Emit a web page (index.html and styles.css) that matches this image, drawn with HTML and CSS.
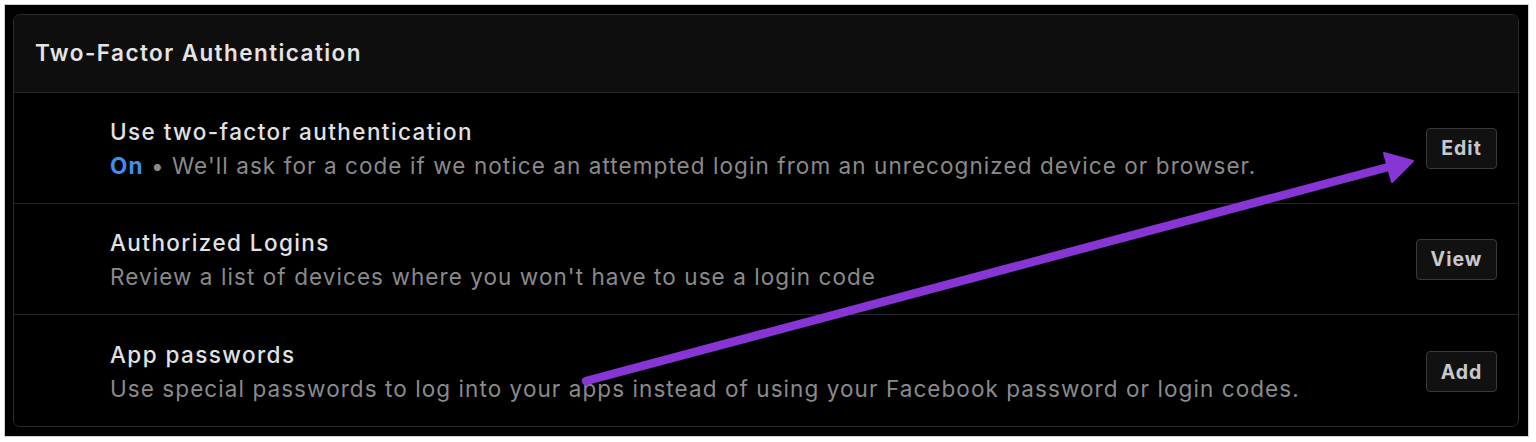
FILE: index.html
```html
<!DOCTYPE html>
<html lang="en">
<head>
<meta charset="utf-8">
<title>Two-Factor Authentication</title>
<link rel="stylesheet" href="styles.css">
</head>
<body>
<div class="frame">
  <section class="panel">
    <header class="panel-head">Two-Factor Authentication</header>
    <div class="row row-1">
      <div class="row-text">
        <div class="row-title">Use two-factor authentication</div>
        <div class="row-sub"><span class="on">On</span> • We'll ask for a code if we notice an attempted login from an unrecognized device or browser.</div>
      </div>
      <button class="btn btn-edit">Edit</button>
    </div>
    <div class="row row-2">
      <div class="row-text">
        <div class="row-title">Authorized Logins</div>
        <div class="row-sub">Review a list of devices where you won't have to use a login code</div>
      </div>
      <button class="btn btn-view">View</button>
    </div>
    <div class="row row-3">
      <div class="row-text">
        <div class="row-title">App passwords</div>
        <div class="row-sub">Use special passwords to log into your apps instead of using your Facebook password or login codes.</div>
      </div>
      <button class="btn btn-add">Add</button>
    </div>
  </section>
</div>
<svg class="arrow" width="1536" height="442" viewBox="0 0 1536 442" aria-hidden="true">
  <line x1="586" y1="381" x2="1392" y2="166" stroke="#8735d4" stroke-width="8.5" stroke-linecap="round"/>
  <polygon points="1413,161 1384,153 1392,182" fill="#8735d4" stroke="#8735d4" stroke-width="2" stroke-linejoin="round"/>
</svg>
</body>
</html>
```
FILE: styles.css
```css
* { box-sizing: border-box; }
html, body { margin: 0; padding: 0; background: #ffffff; }
body {
  width: 1536px;
  height: 442px;
  position: relative;
  overflow: hidden;
  font-family: Inter, "Noto Sans", "Liberation Sans", sans-serif;
}
.frame {
  box-sizing: content-box;
  margin: 4px 0 0 4px;
  width: 1506px;
  height: 413px;
  padding: 9px 9px 9px 8px;
  background: #000;
  border: 1px solid #cfcfcf;
}
.panel {
  width: 1506px;
  height: 413px;
  border: 1px solid #2a2a2c;
  border-radius: 7px;
  background: #000;
  overflow: hidden;
  display: flex;
  flex-direction: column;
}
.panel-head {
  height: 78px;
  flex: none;
  background: #0e0e0f;
  border-bottom: 1px solid #262628;
  display: flex;
  align-items: center;
  padding-left: 21px;
  padding-bottom: 2px;
  color: #e4e4e4;
  font-size: 22.5px;
  font-weight: 600;
  letter-spacing: 1.42px;
}
.row {
  display: flex;
  align-items: center;
  justify-content: space-between;
  padding: 0 21px 0 96px;
  border-bottom: 1px solid #262628;
}
.row-1 { height: 111px; }
.row-2 { height: 112px; }
.row-3 { height: 111px; border-bottom: none; }
.row-text { display: flex; flex-direction: column; padding-top: 2px; }
.row-title {
  color: #e2e2e2;
  font-size: 22.5px;
  font-weight: 500;
  line-height: 34px;
  letter-spacing: 1.41px;
}
.row-sub {
  color: #8a8a8c;
  font-size: 22.5px;
  font-weight: 400;
  line-height: 34px;
  letter-spacing: 1.07px;
}
.on { color: #3f8ef2; font-weight: 700; }
.btn {
  height: 41px;
  background: #111112;
  border: 1px solid #3a3a3c;
  border-radius: 4px;
  color: #c9c9cb;
  font-family: inherit;
  font-size: 19.5px;
  font-weight: 700;
  letter-spacing: 1px;
  padding: 0;
  text-align: center;
}
.btn-edit { width: 71px; margin-top: 1px; }
.btn-view { width: 81px; margin-top: 0; }
.btn-add { width: 71px; margin-top: 2px; }
.arrow {
  position: absolute;
  left: 0;
  top: 0;
  pointer-events: none;
}
```
